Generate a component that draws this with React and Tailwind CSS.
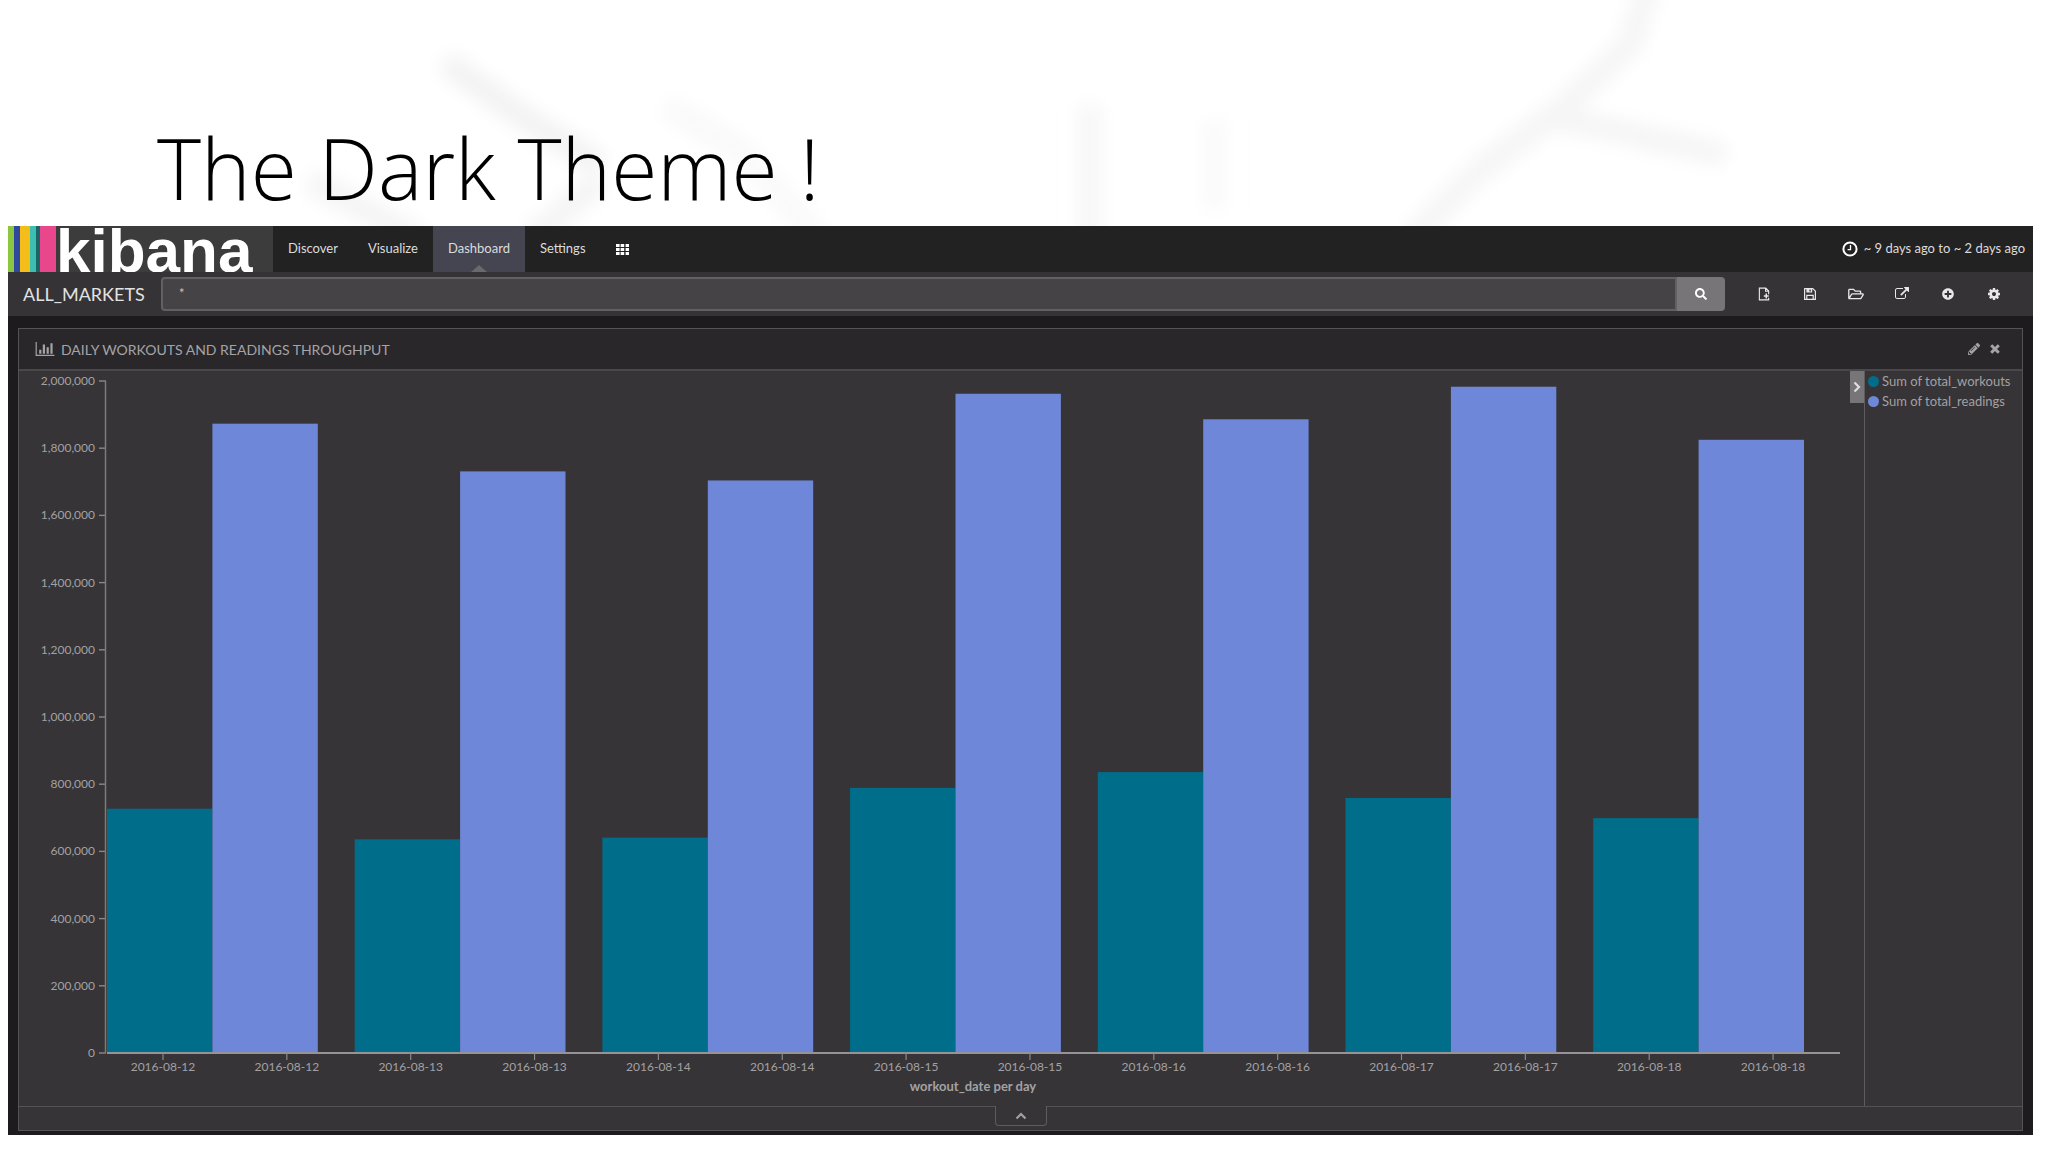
import React from "react";
import { FaSearch, FaRegFolderOpen, FaPlusCircle, FaPencilAlt } from "react-icons/fa";

const DAYS = [
  { date: "2016-08-12", workouts: 727000, readings: 1873000 },
  { date: "2016-08-13", workouts: 636000, readings: 1731000 },
  { date: "2016-08-14", workouts: 641000, readings: 1704000 },
  { date: "2016-08-15", workouts: 789000, readings: 1962000 },
  { date: "2016-08-16", workouts: 836000, readings: 1886000 },
  { date: "2016-08-17", workouts: 759000, readings: 1983000 },
  { date: "2016-08-18", workouts: 699000, readings: 1825000 },
];

const LEGEND = [
  { label: "Sum of total_workouts", dot: "bg-[#006e8a]" },
  { label: "Sum of total_readings", dot: "bg-[#6f87d8]" },
];

const STRIPES = [
  "w-1.5 bg-[#8ac63f]",
  "w-1.5 bg-[#2f4a9c]",
  "w-2.5 bg-[#f4bd19]",
  "w-1.5 bg-[#3ebeb0]",
  "w-1 bg-[#1c6566]",
  "w-4 bg-[#e8478b]",
];

function NewIcon() {
  return (
    <svg viewBox="0 0 14 16" className="h-3.5 w-3.5" fill="none" stroke="currentColor" strokeWidth="1.3" aria-hidden="true">
      <path d="M12.3 8.2V4.6L9 1.3H1.7v13.4h10.6v-2.4M8.8 1.3v3.5h3.5" />
      <path d="M9.6 7.4v5.6M6.8 10.2h5.6" strokeWidth="1.7" />
    </svg>
  );
}

function SaveIcon() {
  return (
    <svg viewBox="0 0 14 14" className="h-3.5 w-3.5" fill="none" stroke="currentColor" strokeWidth="1.2" aria-hidden="true">
      <path d="M1.6 1.6h8.2l2.6 2.6v8.2H1.6z" strokeLinejoin="round" />
      <path d="M3.8 12.4V8.3h6.4v4.1" />
      <path fillRule="evenodd" d="M3.4 1.6h5.8v4H3.4zM6.4 2.4v2.2h1.4V2.4z" fill="currentColor" stroke="none" />
    </svg>
  );
}

function ShareIcon() {
  return (
    <svg viewBox="0 0 1792 1792" className="h-3.5 w-3.5" fill="currentColor" aria-hidden="true">
      <path d="M1408 928v320q0 119-84.5 203.5t-203.5 84.5h-832q-119 0-203.5-84.5t-84.5-203.5v-832q0-119 84.5-203.5t203.5-84.5h704q14 0 23 9t9 23v64q0 14-9 23t-23 9h-704q-66 0-113 47t-47 113v832q0 66 47 113t113 47h832q66 0 113-47t47-113v-320q0-14 9-23t23-9h64q14 0 23 9t9 23zM1792 64v512q0 26-19 45t-45 19-45-19l-176-176-652 652q-10 10-23 10t-23-10l-114-114q-10-10-10-23t10-23l652-652-176-176q-19-19-19-45t19-45 45-19h512q26 0 45 19t19 45z" />
    </svg>
  );
}

function CogIcon() {
  return (
    <svg viewBox="128 128 1536 1536" className="h-3 w-3" fill="currentColor" aria-hidden="true">
      <path d="M1152 896q0-106-75-181t-181-75-181 75-75 181 75 181 181 75 181-75 75-181zm512-109v222q0 12-8 23t-20 13l-185 28q-19 54-39 91 35 50 107 138 10 12 10 25t-9 23q-27 37-99 108t-94 71q-12 0-26-9l-138-108q-44 23-91 38-16 136-29 186-7 28-36 28h-222q-14 0-24.5-8.5t-11.5-21.5l-28-184q-49-16-90-37l-141 107q-10 9-25 9-14 0-25-11-126-114-165-168-7-10-7-23 0-12 8-23 15-21 51-66.5t54-70.5q-27-50-41-99l-183-27q-13-2-21-12.5t-8-23.5v-222q0-12 8-23t19-13l186-28q14-46 39-92-40-57-107-138-10-12-10-24 0-10 9-23 26-36 98.5-107.5t94.5-71.5q13 0 26 10l138 107q44-23 91-38 16-136 29-186 7-28 36-28h222q14 0 24.5 8.5t11.5 21.5l28 184q49 16 90 37l142-107q9-9 24-9 13 0 25 10 129 119 165 170 7 8 7 22 0 12-8 23-15 21-51 66.5t-54 70.5q26 50 41 98l183 28q13 2 21 12.5t8 23.5z" />
    </svg>
  );
}

function CloseIcon() {
  return (
    <svg viewBox="0 0 10 10" className="h-2.5 w-2.5" stroke="currentColor" strokeWidth="3" aria-hidden="true">
      <path d="M1.2 1.2l7.6 7.6M8.8 1.2L1.2 8.8" />
    </svg>
  );
}

function GridIcon() {
  return (
    <svg viewBox="0 0 13 11" className="h-[11px] w-[13px]" fill="currentColor" aria-hidden="true">
      {[0, 4, 8].map((y) => [0, 5, 10].map((x) => <rect key={`${x}-${y}`} x={x - (x ? 0.4 : 0)} y={y} width="3.6" height="3" />))}
    </svg>
  );
}

function ClockIcon() {
  return (
    <svg viewBox="0 0 16 16" className="h-4 w-4" fill="none" stroke="currentColor" aria-hidden="true">
      <circle cx="8" cy="8" r="6.6" strokeWidth="2" />
      <path d="M8.5 4v4.6H5.6" strokeWidth="1.3" />
    </svg>
  );
}

function BarsIcon() {
  return (
    <svg viewBox="0 0 20 16" className="h-4 w-5" fill="currentColor" aria-hidden="true">
      <path d="M.6 1h1.2v12.8h17.6V15H.6z" />
      <path d="M4.2 8.8h2.2v4H4.2zM7.8 3.6H10v9.2H7.8zM11.6 6.2h2.2v6.6h-2.2zM15.4 2.2h2.2v10.6h-2.2z" />
    </svg>
  );
}

function Chevron({ d }) {
  return (
    <svg viewBox="0 0 12 12" className="h-3 w-3" fill="none" stroke="currentColor" strokeWidth="2.2" aria-hidden="true">
      <path d={d} />
    </svg>
  );
}

function Backdrop() {
  return (
    <svg viewBox="0 0 2048 226" preserveAspectRatio="xMinYMin slice" className="absolute inset-0 h-full w-full" fill="none" aria-hidden="true">
      <defs>
        <filter id="soft">
          <feGaussianBlur stdDeviation="9" />
        </filter>
      </defs>
      <g filter="url(#soft)" stroke="#f2f2f2" strokeWidth="24">
        <path d="M1650 -20L1630 45L1560 110L1480 170L1410 240" stroke="#f5f5f5" />
        <path d="M1545 115L1725 155" stroke="#f5f5f5" />
        <path d="M445 62L530 122L600 165" />
        <path d="M1090 105V240" stroke="#f7f7f7" />
        <path d="M665 105L740 150L820 240" stroke="#f9f9f9" />
        <path d="M310 180L420 240M600 180L530 240" stroke="#f4f4f4" />
        <path d="M1215 120V210" stroke="#fafafa" />
      </g>
    </svg>
  );
}

const BASE = 682;
const TOP = 10;
const LEFT = 87;
const STEP = 247.7;
const BAR = 105.4;
const yOf = (v) => BASE - (v / 2000000) * (BASE - TOP);

function Chart() {
  const ticks = Array.from({ length: 11 }, (_, i) => i * 200000);
  return (
    <svg
      viewBox="0 0 1845 735"
      role="img"
      aria-label="Daily workouts and readings"
      className="block h-auto w-full font-[Lato,sans-serif] text-[12px]"
      fill="#a3a1a4"
    >
      {DAYS.map((d, i) => {
        const x = LEFT + 1 + i * STEP;
        return (
          <g key={d.date}>
            <rect x={x} y={yOf(d.workouts)} width={BAR} height={BASE - yOf(d.workouts)} fill="#006e8a" />
            <rect x={x + BAR} y={yOf(d.readings)} width={BAR} height={BASE - yOf(d.readings)} fill="#6f87d8" />
          </g>
        );
      })}
      {ticks.map((v) => (
        <g key={v}>
          <path d={`M80 ${yOf(v)}h7`} stroke="#8a888b" strokeWidth="1.4" />
          <text x="76" y={yOf(v) + 4} textAnchor="end">
            {v.toLocaleString("en-US")}
          </text>
        </g>
      ))}
      <path d={`M86.5 ${TOP}V${BASE}`} stroke="#7d7b7e" strokeWidth="1.5" />
      <path d={`M88 ${BASE}H1821`} stroke="#959396" strokeWidth="2" />
      {DAYS.flatMap((d) => [d.date, d.date]).map((date, i) => {
        const x = 144 + i * (STEP / 2);
        return (
          <g key={i}>
            <path d={`M${x} ${BASE}v7`} stroke="#8a888b" strokeWidth="1.2" />
            <text x={x} y={BASE + 18} textAnchor="middle">
              {date}
            </text>
          </g>
        );
      })}
      <text x="954" y="720" textAnchor="middle" className="text-[13px] font-bold">
        workout_date per day
      </text>
    </svg>
  );
}

const NAV = ["Discover", "Visualize", "Dashboard", "Settings"];

function NavBar() {
  return (
    <header className="flex h-[46px] bg-[#222223] text-[13px] text-[#dcdcdc]">
      <a href="#home" className="flex w-[265px] shrink-0 bg-[#3c3c3c]">
        {STRIPES.map((s) => (
          <span key={s} className={`h-full shrink-0 ${s}`} />
        ))}
        <span className="font-['Liberation_Sans',sans-serif] text-[62px] leading-[50px] font-bold text-white">kibana</span>
      </a>
      <nav className="relative flex">
        {NAV.map((item) =>
          item === "Dashboard" ? (
            <a key={item} href="#dashboard" aria-current="page" className="relative flex items-center bg-[#444551] px-[15px]">
              {item}
              <span className="absolute bottom-0 left-1/2 -ml-2 h-0 w-0 border-x-8 border-b-[7px] border-x-transparent border-b-[#69686d]" />
            </a>
          ) : (
            <a key={item} href={`#${item.toLowerCase()}`} className="flex items-center px-[15px]">
              {item}
            </a>
          )
        )}
        <button type="button" aria-label="Apps" className="flex items-center px-[15px] text-white">
          <GridIcon />
        </button>
      </nav>
      <button type="button" className="mr-2 ml-auto flex items-center gap-1.5">
        <span className="text-white">
          <ClockIcon />
        </span>
        ~ 9 days ago to ~ 2 days ago
      </button>
    </header>
  );
}

function QueryBar() {
  const tools = [
    ["New dashboard", <NewIcon />],
    ["Save dashboard", <SaveIcon />],
    ["Load dashboard", <FaRegFolderOpen className="h-3.5 w-4" />],
    ["Share", <ShareIcon />],
    ["Add visualization", <FaPlusCircle className="h-3 w-3" />],
    ["Options", <CogIcon />],
  ];
  return (
    <div className="relative flex h-11 items-center bg-[#353336] pr-4 pl-[15px]">
      <h2 className="w-[138px] shrink-0 text-[18px] leading-6 text-[#e2e2e2]">ALL_MARKETS</h2>
      <form className="mr-4 flex h-[34px] grow" onSubmit={(e) => e.preventDefault()}>
        <input
          type="text"
          aria-label="Query"
          defaultValue="*"
          className="min-w-0 grow rounded-l border-2 border-[#626063] bg-[#454345] px-4 text-[13px] text-[#c4c4c4] outline-none"
        />
        <button type="submit" aria-label="Search" className="flex w-12 items-center justify-center rounded-r bg-[#777578] text-white">
          <FaSearch className="h-3 w-3" />
        </button>
      </form>
      {tools.map(([label, icon]) => (
        <button key={label} type="button" aria-label={label} className="flex h-8 w-[46px] items-center justify-center text-[#e8e8e8]">
          {icon}
        </button>
      ))}
    </div>
  );
}

function Panel() {
  return (
    <section className="mx-2.5 border border-[#545255] bg-[#363436]">
      <div className="flex h-[42px] items-center border-b-2 border-[#4a484b] bg-[#29272a] px-4 text-[#a5a3a6]">
        <BarsIcon />
        <h3 className="ml-1.5 text-[14px]">DAILY WORKOUTS AND READINGS THROUGHPUT</h3>
        <button type="button" aria-label="Edit" className="ml-auto p-1">
          <FaPencilAlt className="h-3 w-3" />
        </button>
        <button type="button" aria-label="Remove" className="p-1.5">
          <CloseIcon />
        </button>
      </div>
      <div className="flex">
        <div className="relative min-w-0 grow">
          <Chart />
          <button
            type="button"
            aria-label="Toggle legend"
            className="absolute top-0 right-0 flex h-8 w-3.5 items-center justify-center bg-[#777578] text-[#dedede]"
          >
            <Chevron d="M3.5 1.5L8 6L3.5 10.5" />
          </button>
        </div>
        <ul className="w-[158px] shrink-0 border-l border-[#5e5c5f] px-[3px] text-[13px] leading-5 text-[#a3a1a4]">
          {LEGEND.map(({ label, dot }) => (
            <li key={label} className="flex items-center gap-[3px] whitespace-nowrap">
              <span className={`h-[11px] w-[11px] shrink-0 rounded-full ${dot}`} />
              {label}
            </li>
          ))}
        </ul>
      </div>
      <div className="flex h-6 justify-center border-t border-[#545255]">
        <button
          type="button"
          aria-label="Show details"
          className="-mt-px flex h-5 w-[52px] items-center justify-center rounded-b-sm border border-t-0 border-[#5e5c5f] bg-[#363436] text-[#a3a1a4]"
        >
          <Chevron d="M1.5 8.5L6 4L10.5 8.5" />
        </button>
      </div>
    </section>
  );
}

export default function App() {
  return (
    <main className="min-h-screen bg-white font-[Lato,sans-serif]">
      <div className="relative h-[226px] overflow-hidden">
        <Backdrop />
        <h1 className="relative pt-[112px] pl-[157px] font-['Open_Sans',sans-serif] text-[84px] leading-[112px] font-light text-black">
          The Dark Theme !
        </h1>
      </div>
      <div className="mr-[15px] ml-2 bg-[#1d1b1e] pb-1">
        <NavBar />
        <QueryBar />
        <div className="pt-3">
          <Panel />
        </div>
      </div>
    </main>
  );
}
